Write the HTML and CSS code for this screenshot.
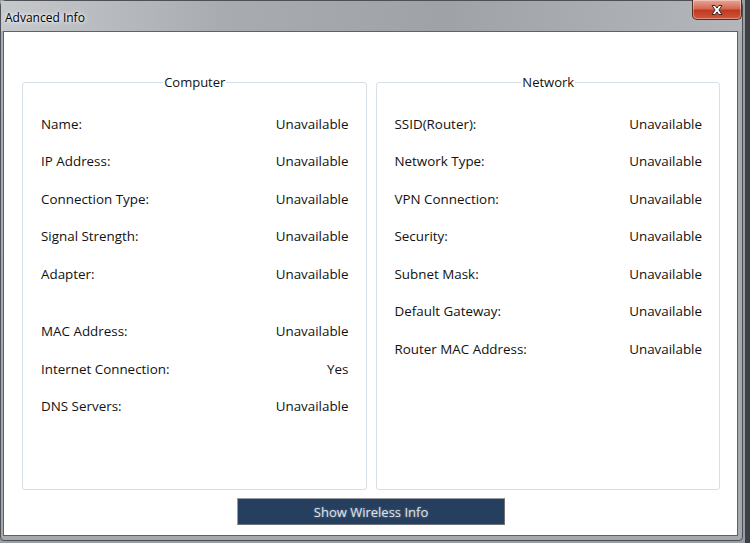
FILE: index.html
```html
<!DOCTYPE html>
<html lang="en">

<head>
    <meta charset="UTF-8">
    <meta name="viewport" content="width=device-width, initial-scale=1.0">
    <title>Advanced Info</title>
    <link rel="stylesheet" href="styles.css">
</head>

<body>
    <div class="window">
        <div class="titlebar">
            <span class="title">Advanced Info</span>
            <div class="close">
                <svg width="16" height="12" viewBox="0 0 16 12">
                    <path d="M3 1.5h3.2l1.8 2.6 1.8-2.6H13L9.9 6 13 10.5H9.8L8 7.9 6.2 10.5H3L6.1 6z" fill="#fff" stroke="#3b2a2a" stroke-width="1" stroke-linejoin="round"/>
                </svg>
            </div>
        </div>
        <div class="client">
            <div class="panels">
                <fieldset class="group">
                    <legend>Computer</legend>
                    <div class="row"><span>Name:</span><span>Unavailable</span></div>
                    <div class="row"><span>IP Address:</span><span>Unavailable</span></div>
                    <div class="row"><span>Connection Type:</span><span>Unavailable</span></div>
                    <div class="row"><span>Signal Strength:</span><span>Unavailable</span></div>
                    <div class="row tall"><span>Adapter:</span><span>Unavailable</span></div>
                    <div class="row"><span>MAC Address:</span><span>Unavailable</span></div>
                    <div class="row"><span>Internet Connection:</span><span>Yes</span></div>
                    <div class="row"><span>DNS Servers:</span><span>Unavailable</span></div>
                </fieldset>
                <fieldset class="group">
                    <legend>Network</legend>
                    <div class="row"><span>SSID(Router):</span><span>Unavailable</span></div>
                    <div class="row"><span>Network Type:</span><span>Unavailable</span></div>
                    <div class="row"><span>VPN Connection:</span><span>Unavailable</span></div>
                    <div class="row"><span>Security:</span><span>Unavailable</span></div>
                    <div class="row"><span>Subnet Mask:</span><span>Unavailable</span></div>
                    <div class="row"><span>Default Gateway:</span><span>Unavailable</span></div>
                    <div class="row"><span>Router MAC Address:</span><span>Unavailable</span></div>
                </fieldset>
            </div>
            <button class="wireless">Show Wireless Info</button>
        </div>
    </div>
</body>

</html>
```

FILE: styles.css
```css
* {
    margin: 0;
    padding: 0;
    box-sizing: border-box;
}

body {
    width: 750px;
    height: 543px;
    overflow: hidden;
    background: linear-gradient(to right, #9a9da1 0, #9a9da1 745px, #3d4045 745px);
    font-family: "Open Sans", "Noto Sans", sans-serif;
}

.window {
    width: 743px;
    height: 541px;
    display: flex;
    flex-direction: column;
    background: linear-gradient(#b9bdc2, #a9adb2 40px, #a5a9ae);
    border: 1px solid #4d5157;
    border-radius: 6px 6px 4px 4px;
    position: relative;
}

.titlebar {
    height: 30px;
    display: flex;
    align-items: center;
    padding: 2px 0 0 4px;
    background: linear-gradient(to right, #c6c8cb, #a8acb1 30%, #9fa3a8 60%, #b3b6ba);
}

.title {
    font-size: 12px;
    color: #000;
    text-shadow: 0 0 6px #fff, 0 0 3px #fff;
}

/* caption button sits on the top frame edge */
.close {
    position: absolute;
    top: -1px;
    right: 0;
    width: 50px;
    height: 20px;
    border: 1px solid #5b2a22;
    border-top: none;
    border-radius: 0 0 5px 5px;
    background: linear-gradient(#e8a698, #d46a54 45%, #c0391f 55%, #d0583c);
    display: flex;
    align-items: center;
    justify-content: center;
    box-shadow: inset 0 0 0 1px rgba(255, 255, 255, 0.35);
}

.client {
    flex: 1;
    margin: 0 4px 4px 2px;
    background: #fff;
    border: 1px solid #5e6268;
    display: flex;
    flex-direction: column;
    align-items: center;
    padding: 41px 17px 0 18px;
}

.panels {
    display: flex;
    gap: 9px;
    width: 100%;
}

.group {
    flex: 1;
    height: 417px;
    border: 1px solid #d5dfe5;
    border-radius: 3px;
    padding: 14px 17px 0 18px;
}

.group legend {
    margin: 0 auto;
    padding: 0 1px;
    font-size: 13px;
    color: #111;
}

.row {
    height: 37.5px;
    display: flex;
    align-items: center;
    justify-content: space-between;
    font-size: 13.4px;
    color: #111;
}

.row.tall {
    margin-bottom: 20px;
}

.wireless {
    margin-top: 8px;
    width: 268px;
    height: 27px;
    background: #273f5f;
    border: 1px solid #9a9ea4;
    border-right-color: #6f7379;
    border-bottom-color: #6f7379;
    color: #dde2e8;
    font-family: "Open Sans", "Noto Sans", sans-serif;
    font-size: 13px;
    text-shadow: 0 0 2px #7b8ca3;
}
```
